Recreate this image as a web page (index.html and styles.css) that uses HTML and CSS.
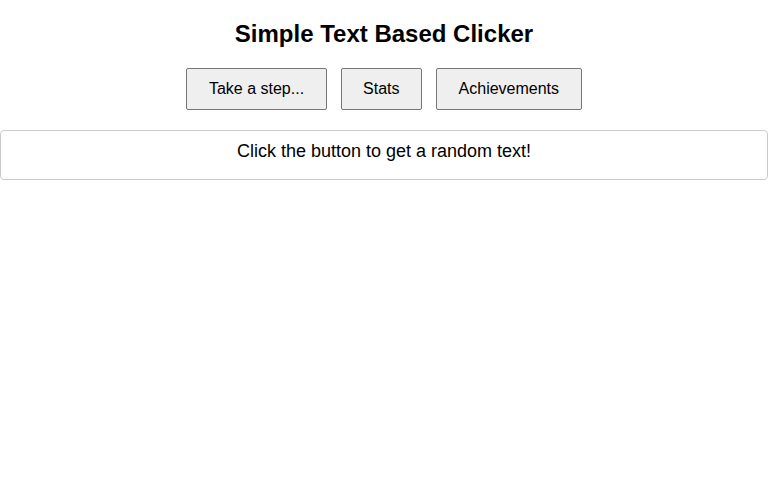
FILE: index.html
```html
<!DOCTYPE html>
<html lang="en">
<head>
  <meta charset="UTF-8">
  <title>Simple Text Based Clicker</title>
  <link rel="stylesheet" href="styles.css">
</head>
<body>
  <h1>Simple Text Based Clicker</h1>

  <div class="controls">
    <button id="stepBtn">Take a step...</button>
    <button id="statsBtn">Stats</button>
    <button id="achBtn">Achievements</button>
  </div>

  <div id="output">Click the button to get a random text!</div>
</body>
</html>
```

FILE: styles.css
```css
body {
  font-family: "Liberation Sans", Arial, sans-serif;
  background-color: #fff;
  color: #000;
  text-align: center;
  margin: 0;
}

h1 {
  font-size: 24px;
  margin: 20px 0 20px;
}

.controls {
  display: flex;
  justify-content: center;
  gap: 14px;
}

button {
  font-family: inherit;
  font-size: 16px;
  padding: 11px 21.5px;
  background-color: #efefef;
  border: 1px solid #767676;
  border-radius: 2px;
  color: #000;
  cursor: pointer;
}

#output {
  margin-top: 20px;
  padding: 10px 10px 17px;
  font-size: 18px;
  border: 1px solid #ccc;
  border-radius: 4px;
}
```
